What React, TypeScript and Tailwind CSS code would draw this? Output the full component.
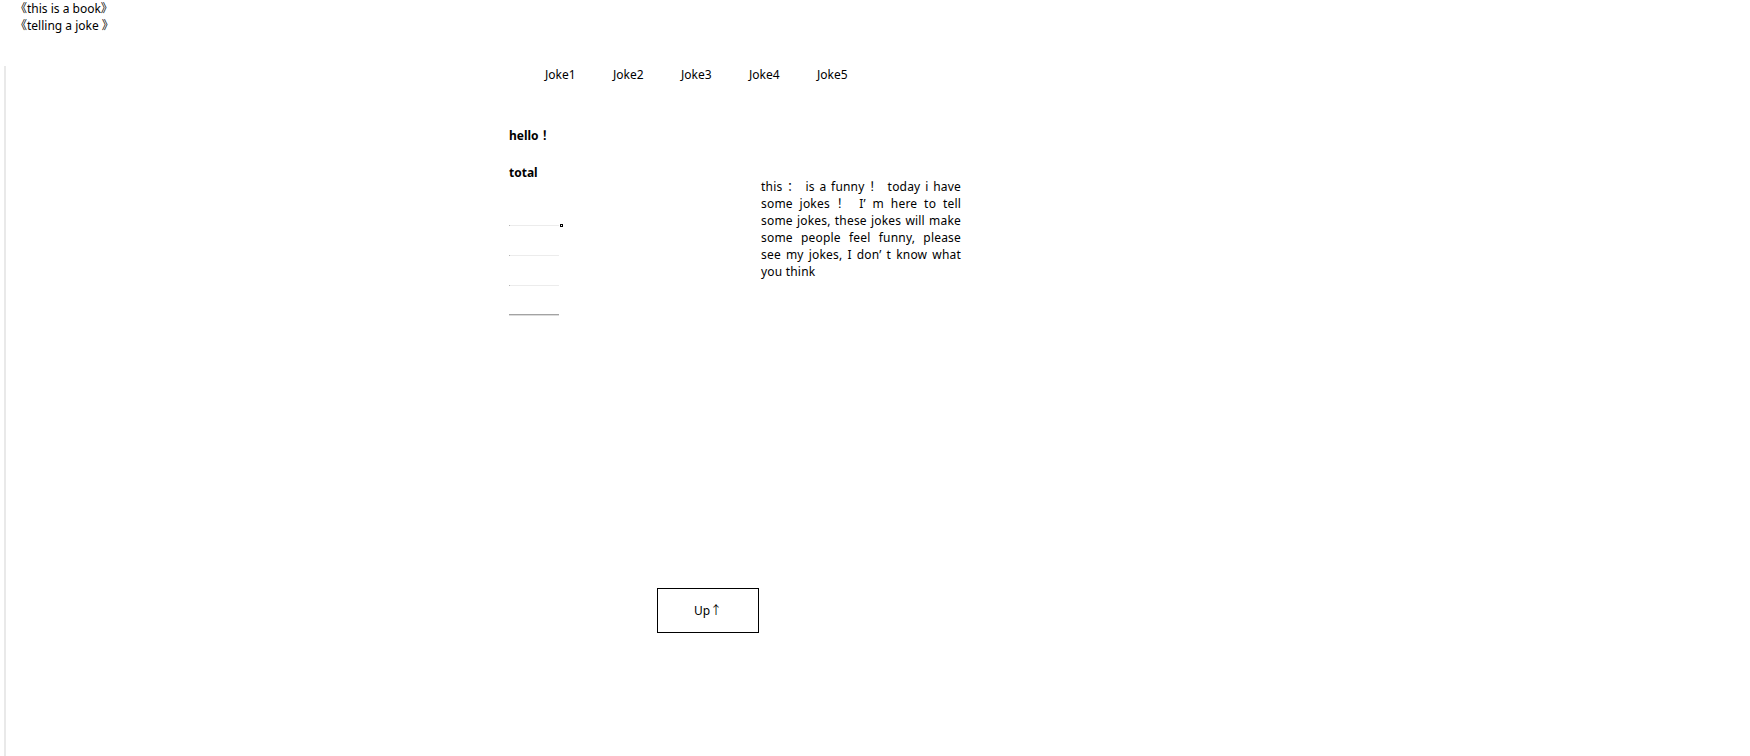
const jokes = ["Joke1", "Joke2", "Joke3", "Joke4", "Joke5"];

const Bar = ({ dark, knob }: { dark?: boolean; knob?: boolean }) => {
  return (
    <div className="flex items-center h-[4px]">
      {dark ? (
        <div className="w-[50px] flex flex-col">
          <div className="h-[1px] bg-[#a3a3a3]" />
          <div className="h-[1px] bg-[#dcdcdc]" />
        </div>
      ) : (
        <div className="w-[50px] h-[1px] flex bg-[#ececec]">
          <div className="w-[1px] h-[1px] bg-[#b5b5b5]" />
        </div>
      )}
      {knob && <div className="ml-[1px] w-[3px] h-[3px] border border-black bg-white" />}
    </div>
  );
};

const App = () => {
  return (
    <div className="w-[1750px] h-[756px] bg-white text-black text-[12px] leading-[17px] font-['Noto_Sans','Noto_Sans_CJK_SC',sans-serif] overflow-hidden">
      <div className="pl-[15px] h-[34px]">
        <p>《this is a book》</p>
        <p>《telling a joke 》</p>
      </div>
      <div className="ml-[4px] mt-[6px] h-[716px] border-l-2 border-[#e9e9e9] pl-[503px]">
        <nav className="mt-[32px] pl-[36px] flex">
          {jokes.map((j) => (
            <a key={j} href="#" className="w-[68px]">
              {j}
            </a>
          ))}
        </nav>
        <div className="mt-[44px] flex">
          <div className="w-[252px]">
            <p className="font-bold">hello ！</p>
            <p className="mt-[20px] font-bold">total</p>
            <div className="mt-[42px] flex flex-col gap-[26px]">
              <Bar knob />
              <Bar />
              <Bar />
              <Bar dark />
            </div>
          </div>
          <p className="mt-[51px] w-[200px] text-justify tracking-[0.2px]">
            this ： is a funny ！ today i have some jokes ！ I’ m here to tell some jokes, these jokes will make some people feel funny, please see my jokes, I don’ t know what you think
          </p>
        </div>
        <button className="mt-[271px] ml-[148px] w-[102px] h-[45px] border border-black flex items-center justify-center">
          Up↑
        </button>
      </div>
    </div>
  );
};

export default App;
